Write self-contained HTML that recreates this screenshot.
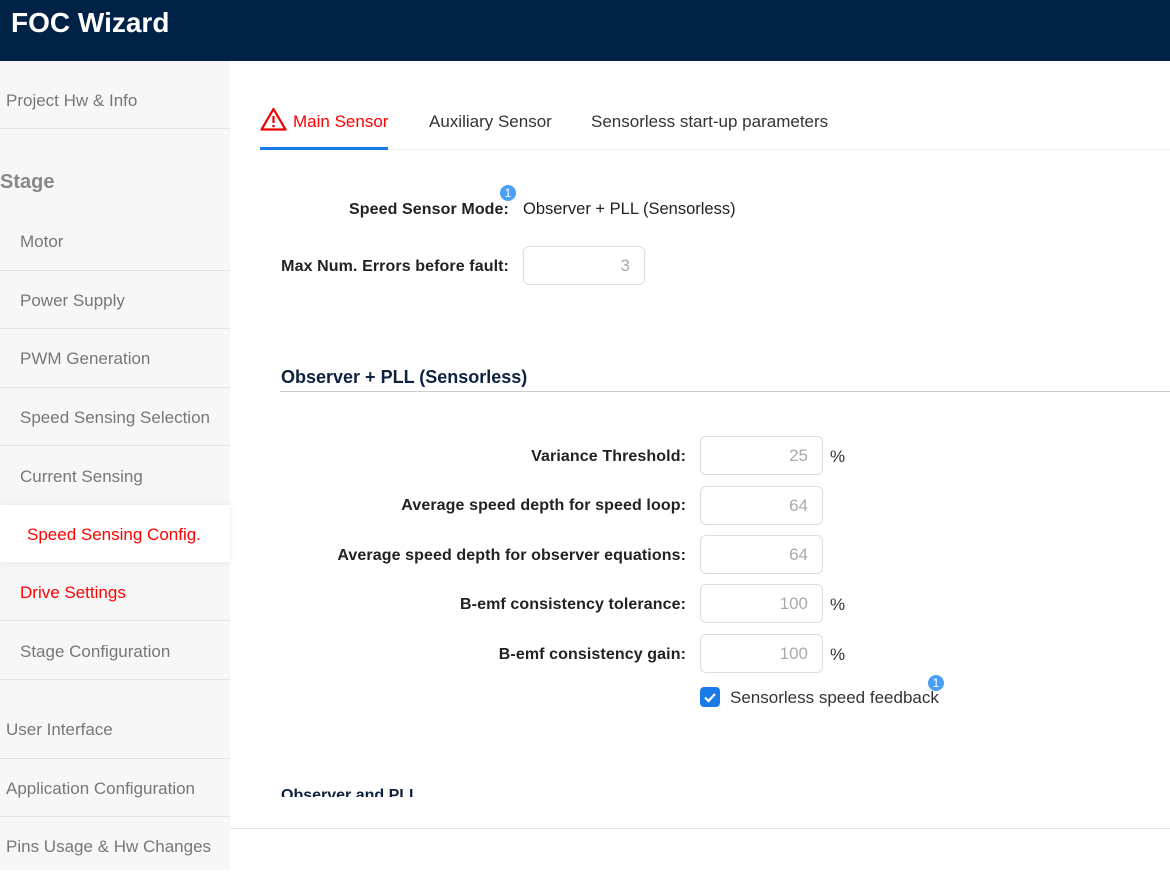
<!DOCTYPE html><html><head><style>
*{box-sizing:border-box;margin:0;padding:0}
body{width:1170px;height:870px;overflow:hidden;font-family:"Liberation Sans",sans-serif;background:#fff;position:relative;color:#222}
.hd{position:absolute;left:0;top:0;width:1170px;height:61px;background:#002247;color:#fff;font-size:28px;font-weight:bold;padding:7px 0 0 11px}
.sb{position:absolute;left:0;top:61px;width:230px;height:809px;background:#f7f7f7}
.it{position:absolute;left:0;width:230px;font-size:17px;color:#777;border-bottom:1px solid #e3e3e3;display:flex;align-items:center}
.t{position:absolute;font-size:17px;white-space:nowrap}
.lb{position:absolute;font-size:16px;font-weight:bold;color:#222;text-align:right;white-space:nowrap;letter-spacing:0.1px}
.in{position:absolute;width:123px;height:39px;border:1px solid #ddd;border-radius:6px;color:#aaa;font-size:17px;text-align:right;padding:9px 14px 0 0}
.pc{position:absolute;font-size:17px;color:#333}
.bd{position:absolute;width:16px;height:16px;border-radius:50%;background:#4aa0f5;color:#fff;font-size:12px;text-align:center;line-height:16px}
</style></head><body>
<div class="hd">FOC Wizard</div>
<div class="sb">
<div class="it" style="top:0;height:68px;padding:13px 0 0 6px">Project Hw &amp; Info</div>
<div style="position:absolute;left:0;top:110px;font-size:20px;font-weight:bold;color:#888">Stage</div>
<div class="it" style="top:152px;height:58px;padding-left:20px">Motor</div>
<div class="it" style="top:210px;height:58px;padding:2px 0 0 20px">Power Supply</div>
<div class="it" style="top:268px;height:59px;padding:2px 0 0 20px">PWM Generation</div>
<div class="it" style="top:327px;height:58px;padding:2px 0 0 20px">Speed Sensing Selection</div>
<div class="it" style="top:385px;height:59px;padding:2px 0 0 20px;border-bottom:none">Current Sensing</div>
<div class="it" style="top:444px;height:57px;padding:3px 0 0 27px;background:#fff;color:#f00;box-shadow:0 0 8px rgba(0,0,0,.08);border-bottom:none;z-index:2">Speed Sensing Config.</div>
<div class="it" style="top:501px;height:59px;padding:4px 0 0 20px;color:#f00">Drive Settings</div>
<div class="it" style="top:560px;height:59px;padding:4px 0 0 20px">Stage Configuration</div>
<div class="it" style="top:619px;height:79px;padding:22px 0 0 6px">User Interface</div>
<div class="it" style="top:698px;height:58px;padding:2px 0 0 6px">Application Configuration</div>
<div class="it" style="top:756px;height:58px;padding:2px 0 0 6px;border:none">Pins Usage &amp; Hw Changes</div>
</div>
<svg style="position:absolute;left:260px;top:107px" width="27" height="24" viewBox="0 0 27 24"><path d="M13.5 2 L25.5 22.5 H1.5 Z" fill="none" stroke="#e00" stroke-width="2.2" stroke-linejoin="round"/><path d="M13.5 9v7" stroke="#e00" stroke-width="2.2"/><circle cx="13.5" cy="19" r="1.3" fill="#e00"/></svg>
<div class="t" style="left:293px;top:112px;color:#f00">Main Sensor</div>
<div class="t" style="left:429px;top:112px;color:#333">Auxiliary Sensor</div>
<div class="t" style="left:591px;top:112px;color:#333">Sensorless start-up parameters</div>
<div style="position:absolute;left:260px;top:149px;width:910px;height:1px;background:#eee"></div>
<div style="position:absolute;left:260px;top:147px;width:128px;height:3px;background:#1a7ae8"></div>
<div class="lb" style="right:661px;top:201px">Speed Sensor Mode:</div>
<div class="bd" style="left:500px;top:185px">1</div>
<div class="t" style="left:523px;top:200px;font-size:16.5px">Observer + PLL (Sensorless)</div>
<div class="lb" style="right:661px;top:258px">Max Num. Errors before fault:</div>
<div class="in" style="left:523px;top:246px;width:122px">3</div>
<div style="position:absolute;left:281px;top:367px;font-size:18px;font-weight:bold;color:#0d2240">Observer + PLL (Sensorless)</div>
<div style="position:absolute;left:280px;top:391px;width:890px;height:1px;background:#ccc"></div>
<div class="lb" style="right:484px;top:448px">Variance Threshold:</div><div class="in" style="left:700px;top:436px">25</div><div class="pc" style="left:830px;top:447px">%</div>
<div class="lb" style="right:484px;top:497px">Average speed depth for speed loop:</div><div class="in" style="left:700px;top:486px">64</div>
<div class="lb" style="right:484px;top:547px">Average speed depth for observer equations:</div><div class="in" style="left:700px;top:535px">64</div>
<div class="lb" style="right:484px;top:596px">B-emf consistency tolerance:</div><div class="in" style="left:700px;top:584px">100</div><div class="pc" style="left:830px;top:595px">%</div>
<div class="lb" style="right:484px;top:646px">B-emf consistency gain:</div><div class="in" style="left:700px;top:634px">100</div><div class="pc" style="left:830px;top:645px">%</div>
<div style="position:absolute;left:700px;top:687px;width:20px;height:20px;background:#1a7ae8;border-radius:4px"><svg width="20" height="20"><path d="M5 10.5l3.5 3.5 6.5-7" fill="none" stroke="#fff" stroke-width="2.2"/></svg></div>
<div class="t" style="left:730px;top:688px;color:#333">Sensorless speed feedback</div>
<div class="bd" style="left:928px;top:675px">1</div>
<div style="position:absolute;left:281px;top:786px;height:11px;overflow:hidden;font-size:16px;font-weight:bold;color:#0d2240;line-height:20px">Observer and PLL</div>
<div style="position:absolute;left:230px;top:828px;width:940px;height:1px;background:#e5e5e5"></div>
</body></html>
